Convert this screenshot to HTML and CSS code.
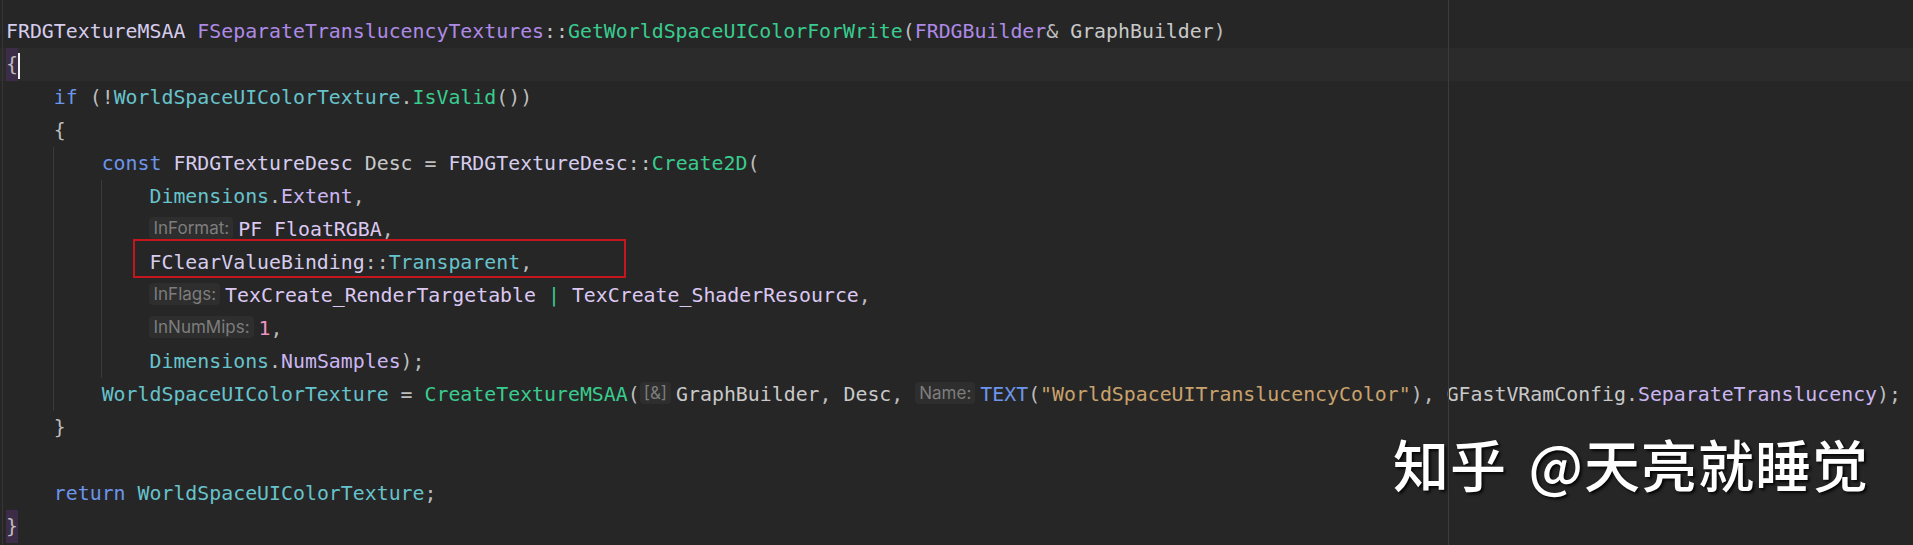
FILE: index.html
```html
<!DOCTYPE html>
<html lang="en">
<head>
    <meta charset="UTF-8">
    <meta name="viewport" content="width=device-width, initial-scale=1.0">
    <title>GetWorldSpaceUIColorForWrite</title>
    <link rel="stylesheet" href="styles.css">
</head>
<body>
    <div class="editor">
        <div class="line"><span class="ty">FRDGTextureMSAA</span> <span class="cls">FSeparateTranslucencyTextures</span>::<span class="fn">GetWorldSpaceUIColorForWrite</span>(<span class="cls">FRDGBuilder</span>&amp; <span class="par">GraphBuilder</span>)</div>
        <div class="line current"><span class="brace">{</span><span class="caret"></span></div>
        <div class="line">    <span class="kw">if</span> (!<span class="gv">WorldSpaceUIColorTexture</span>.<span class="fn">IsValid</span>())</div>
        <div class="line">    {</div>

        <!-- body of the if -->
        <div class="block guide-4">
            <div class="line">        <span class="kw">const</span> <span class="ty">FRDGTextureDesc</span> <span class="par">Desc</span> = <span class="ty">FRDGTextureDesc</span>::<span class="fn">Create2D</span>(</div>
            <div class="block guide-8">
                <div class="line">            <span class="gv">Dimensions</span>.<span class="fld">Extent</span>,</div>
                <div class="line">            <span class="hint">InFormat:</span><span class="en">PF_FloatRGBA</span>,</div>
                <div class="line marked">            <span class="ty">FClearValueBinding</span>::<span class="gv">Transparent</span>,<span class="mark"></span></div>
                <div class="line">            <span class="hint">InFlags:</span><span class="en">TexCreate_RenderTargetable</span> <span class="fn">|</span> <span class="en">TexCreate_ShaderResource</span>,</div>
                <div class="line">            <span class="hint">InNumMips:</span><span class="num">1</span>,</div>
                <div class="line">            <span class="gv">Dimensions</span>.<span class="fld">NumSamples</span>);</div>
            </div>
            <div class="line">        <span class="gv">WorldSpaceUIColorTexture</span> = <span class="fn">CreateTextureMSAA</span>(<span class="hint">[&amp;]</span><span class="par">GraphBuilder</span>, <span class="par">Desc</span>, <span class="hint">Name:</span><span class="kw">TEXT</span>(<span class="str">"WorldSpaceUITranslucencyColor"</span>), <span class="par">GFastVRamConfig</span>.<span class="fld">SeparateTranslucency</span>);</div>
        </div>

        <div class="line">    }</div>
        <div class="line"></div>
        <div class="line">    <span class="kw">return</span> <span class="gv">WorldSpaceUIColorTexture</span>;</div>
        <div class="line"><span class="brace">}</span></div>

        <div class="watermark">知乎 @天亮就睡觉</div>
    </div>
</body>
</html>
```

FILE: styles.css
```css
/* Editor */
body {
    margin: 0;
    background: #262626;
    overflow: hidden;
}

.editor {
    position: relative;
    height: 545px;
    padding: 15px 0 0 6px;
    box-sizing: border-box;
    font-family: "DejaVu Sans Mono", "Liberation Mono", monospace;
    font-size: 19.87px;
    color: #bdbdbd;
}

/* gutter edge and right margin */
.editor::before,
.editor::after {
    content: "";
    position: absolute;
    top: 0;
    bottom: 0;
    width: 1px;
    background: #363636;
}

.editor::before {
    left: 2px;
}

.editor::after {
    left: 1448px;
    background: #3c3c3c;
}

.line {
    height: 33px;
    line-height: 33px;
    white-space: pre;
}

.line.current {
    background: #2b2b2b;
    margin-left: -6px;
    padding-left: 6px;
}

.brace {
    display: inline-block;
    background: #3d2c48;
}

.caret {
    display: inline-block;
    width: 2px;
    height: 26px;
    background: #f0f0f0;
    vertical-align: middle;
}

/* indent guides */
.guide-4 {
    background: linear-gradient(#3a3a3a, #3a3a3a) no-repeat 47px 0 / 1px 100%;
}

.guide-8 {
    background: linear-gradient(#3a3a3a, #3a3a3a) no-repeat 95px 0 / 1px 100%;
}

/* inlay hints */
.hint {
    display: inline-block;
    height: 22px;
    line-height: 22px;
    padding: 0 4px;
    margin-right: 5px;
    border-radius: 4px;
    background: #2e2e2e;
    color: #7d7d7d;
    font-family: Inter, "Noto Sans", sans-serif;
    font-size: 17px;
    vertical-align: 2px;
}

/* annotation box */
.marked {
    position: relative;
}

.mark {
    position: absolute;
    left: 127px;
    top: -7px;
    width: 489px;
    height: 35px;
    border: 2px solid #c4161c;
}

/* syntax colours */
.kw { color: #6c95eb; }
.ty { color: #d6cdee; }
.cls { color: #ae8ae6; }
.fn { color: #39cc8f; }
.gv { color: #66c3cc; }
.fld { color: #cbb6f2; }
.en { color: #dcc8f2; }
.par { color: #c9c9c9; }
.num { color: #ed94c0; }
.str { color: #c9a26d; }

.watermark {
    position: absolute;
    left: 1393px;
    top: 435px;
    font-family: "Noto Sans CJK SC", "Noto Sans", sans-serif;
    font-size: 56px;
    font-weight: 500;
    line-height: 1;
    letter-spacing: 1px;
    word-spacing: 8px;
    color: #ffffff;
    text-shadow: 2px 2px 3px rgba(0, 0, 0, 0.85);
    white-space: nowrap;
}
```
